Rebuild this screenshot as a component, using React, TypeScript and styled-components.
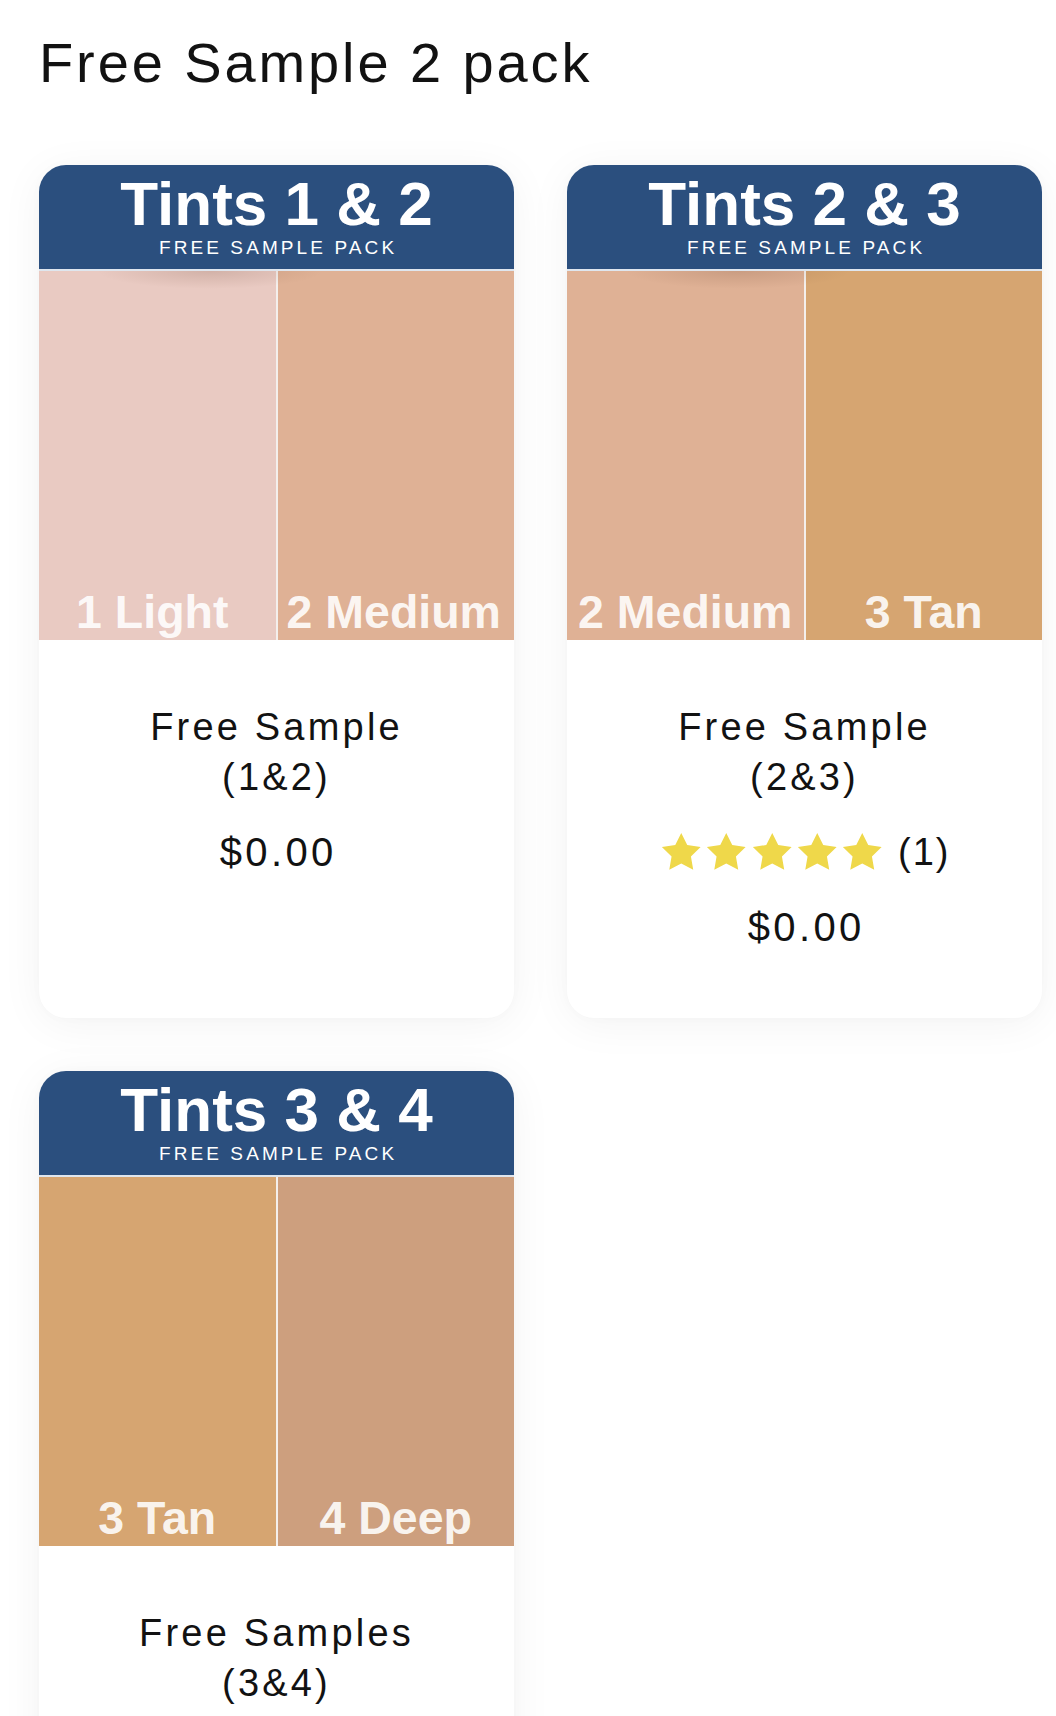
import React from "react";
import styled, { createGlobalStyle } from "styled-components";

const GlobalStyle = createGlobalStyle`
  html, body {
    margin: 0;
    padding: 0;
    background: #ffffff;
  }
  body {
    font-family: "Liberation Sans", Arial, sans-serif;
    color: #121212;
  }
  * { box-sizing: border-box; }
`;

const Page = styled.main`
  padding: 31px 14px 40px 39px;
`;

const Heading = styled.h2`
  margin: 0 0 70px;
  font-size: 56px;
  line-height: 64px;
  font-weight: 400;
  letter-spacing: 2.9px;
  color: #121212;
`;

const Grid = styled.ul`
  list-style: none;
  margin: 0;
  padding: 0;
  display: grid;
  grid-template-columns: repeat(2, 475px);
  column-gap: 53px;
  row-gap: 53px;
`;

const Card = styled.li`
  display: flex;
  flex-direction: column;
  background: #ffffff;
  border-radius: 27px;
  overflow: hidden;
  box-shadow: 0 6px 44px rgba(0, 0, 0, 0.05), 0 0 12px rgba(0, 0, 0, 0.02);
`;

const Media = styled.div`
  width: 475px;
  height: 475px;
  display: flex;
  flex-direction: column;
`;

const Banner = styled.div`
  height: 104px;
  flex: none;
  background: #2b4f7e;
  color: #ffffff;
  display: flex;
  flex-direction: column;
  align-items: center;
  padding-top: 8px;
`;

const BannerTitle = styled.div`
  font-size: 62px;
  line-height: 61px;
  font-weight: 700;
`;

const BannerSub = styled.div`
  margin-top: 4px;
  font-size: 19px;
  line-height: 19px;
  letter-spacing: 3.1px;
  padding-left: 3.1px;
`;

const Swatches = styled.div<{ $shade?: boolean }>`
  position: relative;
  flex: 1;
  display: grid;
  grid-template-columns: 1fr 1fr;
  column-gap: 2px;
  border-top: 2px solid #dfe6ee;
  background: #f4efec;

  &::before {
    content: "";
    display: ${(p) => (p.$shade ? "block" : "none")};
    position: absolute;
    top: 0;
    left: 12%;
    width: 48%;
    height: 18px;
    background: radial-gradient(ellipse at top, rgba(90, 50, 30, 0.16), rgba(90, 50, 30, 0) 70%);
    pointer-events: none;
  }
`;

const Swatch = styled.div<{ $color: string }>`
  background: ${(p) => p.$color};
  display: flex;
  align-items: flex-end;
  justify-content: center;
  padding-bottom: 5px;
`;

const SwatchLabel = styled.span<{ $shift?: number }>`
  font-size: 46.5px;
  line-height: 45px;
  font-weight: 700;
  color: rgba(255, 255, 255, 0.9);
  white-space: nowrap;
  margin-right: ${(p) => (p.$shift ? `${p.$shift}px` : "0")};
`;

const Info = styled.div`
  flex: 1;
  display: flex;
  flex-direction: column;
  align-items: center;
  text-align: center;
  padding: 62px 16px 66px;
`;

const Title = styled.h3`
  margin: 0;
  font-size: 38px;
  line-height: 50px;
  font-weight: 400;
  letter-spacing: 3.2px;
  color: #121212;
`;

const TitleLine = styled.span`
  display: block;
`;

const Rating = styled.div`
  margin-top: 25px;
  height: 50px;
  display: flex;
  align-items: center;
  justify-content: center;
  gap: 13px;
`;

const Stars = styled.span`
  display: flex;
  align-items: center;
`;

const StarIcon = styled.svg`
  width: 46.5px;
  height: 46.5px;
  display: block;
  margin: 0 -0.6px;
`;

const RatingCount = styled.span`
  font-size: 38px;
  line-height: 50px;
  letter-spacing: 2px;
  color: #121212;
`;

const Price = styled.div`
  margin-top: 25px;
  font-size: 40px;
  line-height: 50px;
  letter-spacing: 3.4px;
  padding-left: 3.4px;
  color: #121212;
`;

const Star = () => (
  <StarIcon viewBox="0 0 24 24" aria-hidden="true">
    <path
      d="M12 2l3.09 6.26L22 9.27l-5 4.87 1.18 6.88L12 17.77l-6.18 3.25L7 14.14 2 9.27l6.91-1.01L12 2z"
      fill="#efd84a"
    />
  </StarIcon>
);

type Tint = { label: string; color: string; shift?: number };

type Product = {
  banner: string;
  tints: [Tint, Tint];
  title: [string, string];
  rating?: number;
  shade?: boolean;
};

const LIGHT: Tint = { label: "1 Light", color: "#e9cac2", shift: 10 };
const MEDIUM: Tint = { label: "2 Medium", color: "#dfb195", shift: 4 };
const TAN: Tint = { label: "3 Tan", color: "#d6a571" };
const DEEP: Tint = { label: "4 Deep", color: "#cd9f7e" };

const products: Product[] = [
  { banner: "Tints 1 & 2", tints: [LIGHT, MEDIUM], title: ["Free Sample", "(1&2)"], shade: true },
  { banner: "Tints 2 & 3", tints: [MEDIUM, TAN], title: ["Free Sample", "(2&3)"], rating: 1, shade: true },
  { banner: "Tints 3 & 4", tints: [TAN, DEEP], title: ["Free Samples", "(3&4)"] },
];

export default function App() {
  return (
    <>
      <GlobalStyle />
      <Page>
        <Heading>Free Sample 2 pack</Heading>
        <Grid>
          {products.map((p, i) => (
            <Card key={p.banner}>
              <Media>
                <Banner>
                  <BannerTitle>{p.banner}</BannerTitle>
                  <BannerSub>FREE SAMPLE PACK</BannerSub>
                </Banner>
                <Swatches $shade={p.shade}>
                  {p.tints.map((t) => (
                    <Swatch key={t.label} $color={t.color}>
                      <SwatchLabel $shift={i === 0 ? t.shift : undefined}>{t.label}</SwatchLabel>
                    </Swatch>
                  ))}
                </Swatches>
              </Media>
              <Info>
                <Title>
                  <TitleLine>{p.title[0]}</TitleLine>
                  <TitleLine>{p.title[1]}</TitleLine>
                </Title>
                {p.rating !== undefined && (
                  <Rating>
                    <Stars>
                      <Star />
                      <Star />
                      <Star />
                      <Star />
                      <Star />
                    </Stars>
                    <RatingCount>({p.rating})</RatingCount>
                  </Rating>
                )}
                <Price>$0.00</Price>
              </Info>
            </Card>
          ))}
        </Grid>
      </Page>
    </>
  );
}
